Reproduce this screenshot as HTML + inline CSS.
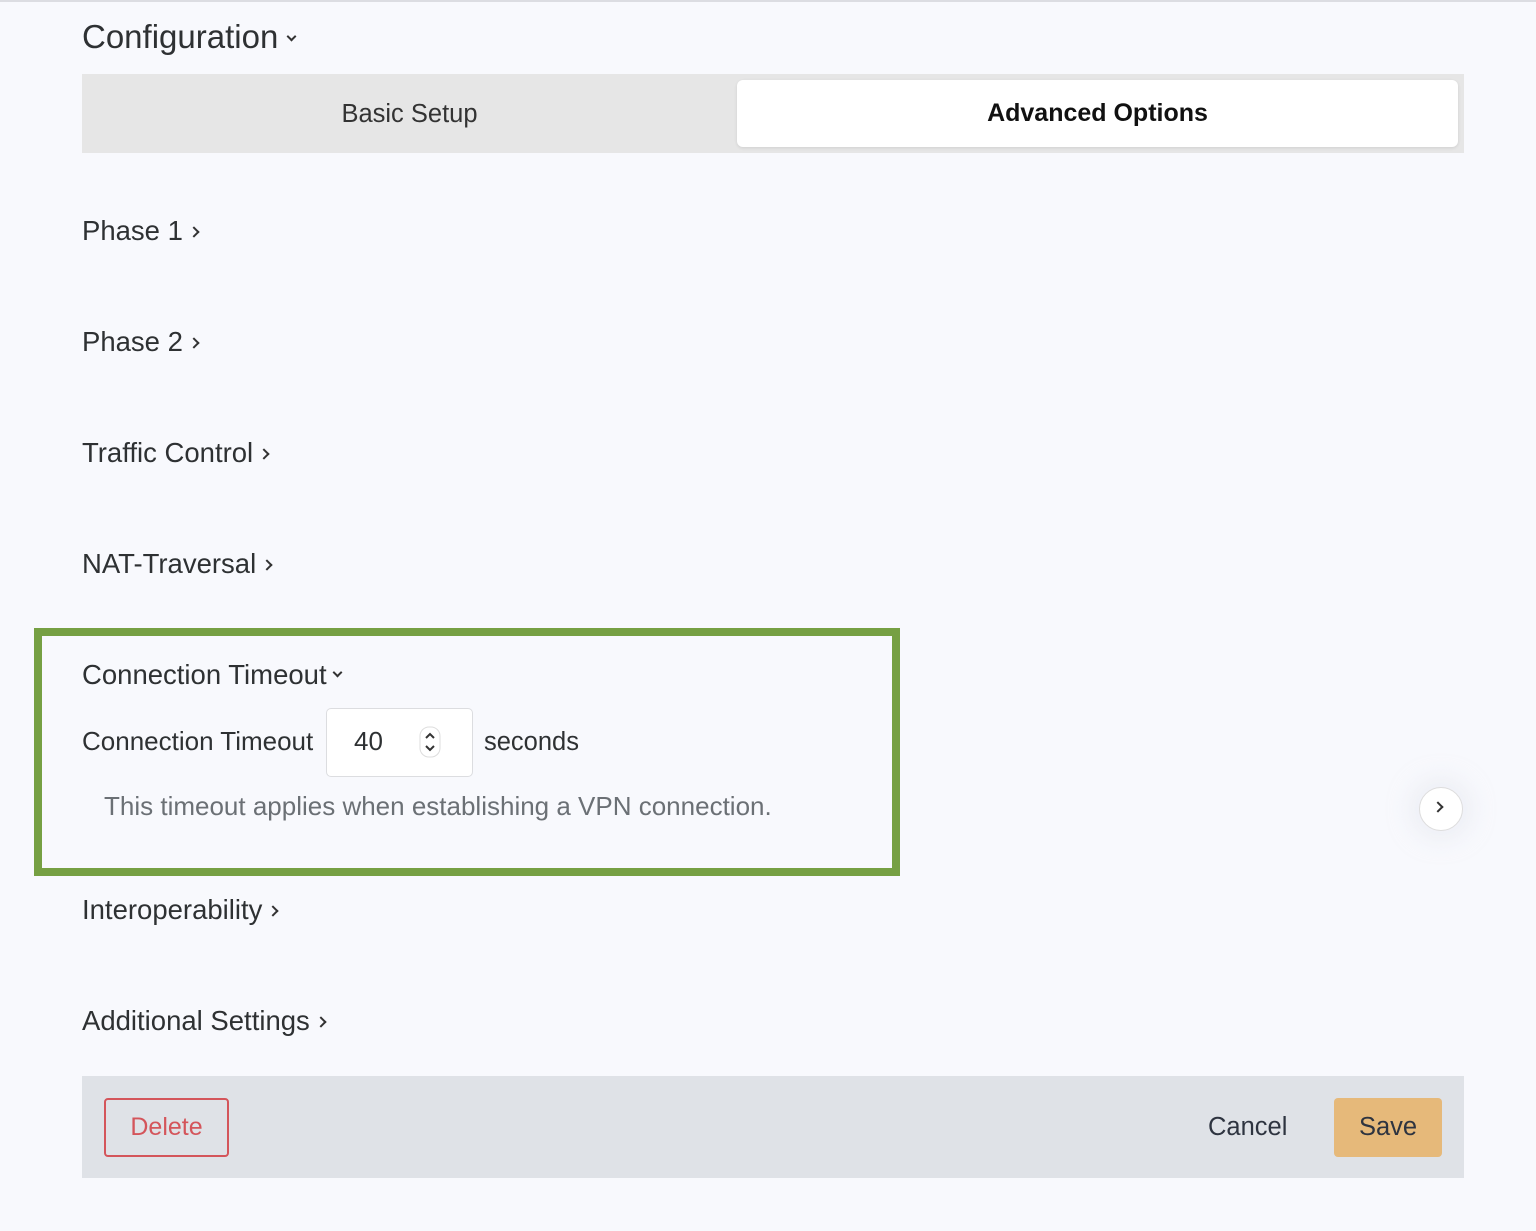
<!DOCTYPE html>
<html><head><meta charset="utf-8"><style>
*{margin:0;padding:0;box-sizing:border-box}
body{width:1536px;height:1231px;background:#f8f9fd;font-family:"Liberation Sans",sans-serif;color:#2e3133;position:relative;overflow:hidden}
.a{position:absolute;white-space:nowrap}
.h{font-size:27.5px;color:#2e3133}
.chev{display:inline-block;width:8px;height:8px;border-right:2px solid #333;border-bottom:2px solid #333;margin-left:7px}
.r{transform:rotate(-45deg);vertical-align:4px}
.d{transform:rotate(45deg);vertical-align:8px}
</style></head><body>
<div class="a" style="left:0;top:0;width:1536px;height:2px;background:#dcdde2"></div>
<div class="a h" style="left:82px;top:18px;font-size:33px">Configuration<span class="chev d" style="width:7px;height:7px;margin-left:10px"></span></div>
<div class="a" style="left:82px;top:74px;width:1382px;height:79px;background:#e6e6e6"></div>
<div class="a" style="left:82px;top:100px;width:655px;text-align:center;font-size:25.5px;color:#333">Basic Setup</div>
<div class="a" style="left:737px;top:80px;width:721px;height:67px;background:#fff;border-radius:6px;box-shadow:0 1px 3px rgba(0,0,0,.1);text-align:center;line-height:67px;font-size:25px;font-weight:bold;color:#111">Advanced Options</div>
<div class="a h" style="left:82px;top:215px">Phase 1<span class="chev r"></span></div>
<div class="a h" style="left:82px;top:326px">Phase 2<span class="chev r"></span></div>
<div class="a h" style="left:82px;top:437px">Traffic Control<span class="chev r"></span></div>
<div class="a h" style="left:82px;top:548px">NAT-Traversal<span class="chev r"></span></div>
<div class="a" style="left:34px;top:628px;width:866px;height:248px;border:8px solid #76a043"></div>
<div class="a h" style="left:82px;top:659px">Connection Timeout<span class="chev d" style="width:7px;height:7px"></span></div>
<div class="a" style="left:82px;top:726px;font-size:26px">Connection Timeout</div>
<div class="a" style="left:326px;top:708px;width:147px;height:69px;background:#fff;border:1px solid #dcdde0;border-radius:5px"></div>
<div class="a" style="left:354px;top:726px;font-size:26px">40</div>
<svg class="a" style="left:419px;top:726px" width="22" height="32" viewBox="0 0 22 32"><rect x="1" y="1" width="20" height="30" rx="9" fill="#fff" stroke="#ddd"/><path d="M7 12 L11 8 L15 12 M7 20 L11 24 L15 20" stroke="#333" stroke-width="2" fill="none"/></svg>
<div class="a" style="left:484px;top:728px;font-size:25.5px">seconds</div>
<div class="a" style="left:104px;top:791px;font-size:26px;color:#6b7075">This timeout applies when establishing a VPN connection.</div>
<div class="a" style="left:1419px;top:787px;width:44px;height:44px;border-radius:50%;background:#fff;border:1px solid #ddd;box-shadow:0 0 20px 10px rgba(230,232,240,.5)"></div>
<div class="a" style="left:1434px;top:803px;width:8px;height:8px;border-right:2px solid #333;border-bottom:2px solid #333;transform:rotate(-45deg)"></div>
<div class="a h" style="left:82px;top:894px">Interoperability<span class="chev r"></span></div>
<div class="a h" style="left:82px;top:1005px">Additional Settings<span class="chev r"></span></div>
<div class="a" style="left:82px;top:1076px;width:1382px;height:102px;background:#dfe2e7"></div>
<div class="a" style="left:104px;top:1098px;width:125px;height:59px;border:2px solid #d4555b;border-radius:4px;text-align:center;line-height:55px;font-size:25px;color:#d4555b">Delete</div>
<div class="a" style="left:1208px;top:1113px;font-size:25.5px;color:#2e3440">Cancel</div>
<div class="a" style="left:1334px;top:1098px;width:108px;height:59px;background:#e6b97a;border-radius:4px;text-align:center;line-height:59px;font-size:25.5px;color:#2e3440">Save</div>
</body></html>
